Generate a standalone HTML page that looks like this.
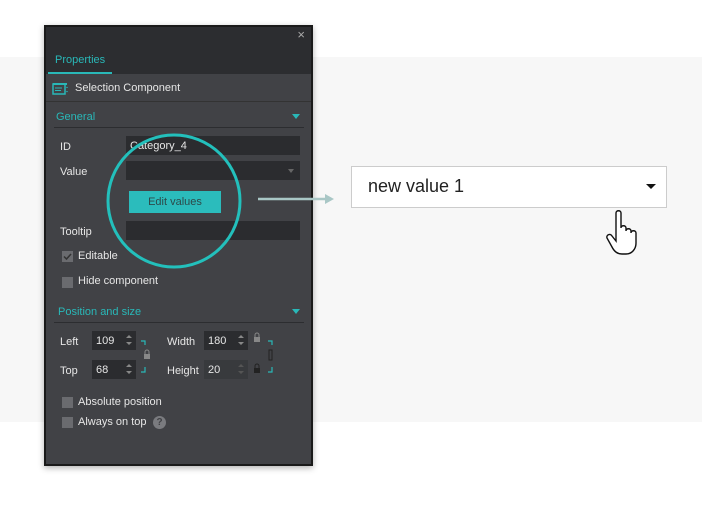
<!DOCTYPE html>
<html><head><meta charset="utf-8"><style>
*{margin:0;padding:0;box-sizing:border-box}
body{width:702px;height:505px;background:#fff;position:relative;overflow:hidden;font-family:"Liberation Sans",sans-serif}
.a{position:absolute}
.band{left:0;top:57px;width:702px;height:365px;background:#f7f7f7}
.panel{left:44px;top:25px;width:269px;height:441px;background:#414246;border:2px solid #1a1a1a;box-shadow:0 2px 6px rgba(0,0,0,.3)}
.t{color:#e6e6e6;font-size:11px}
.teal{color:#29b8b8;font-size:11px}
.in{background:#2b2c2f}
.cb{width:11px;height:11px;background:#6a6b6f}
.line{height:1px;background:#2c2d30}
.sp{width:9px;height:11px}
</style></head><body>
<div class="a band"></div>
<div class="a panel">
 <div class="a" style="left:0;top:0;width:265px;height:47px;background:#2c2d30"></div>
 <div class="a" style="right:6px;top:0px;color:#aaa;font-size:13px">×</div>
 <div class="a teal" style="left:9px;top:27px">Properties</div>
 <div class="a" style="left:2px;top:45px;width:64px;height:2px;background:#29b8b8"></div>
 <svg class="a" style="left:6px;top:55px" width="18" height="14"><rect x="1" y="2" width="12" height="10" fill="none" stroke="#29b8b8" stroke-width="1.5"/><rect x="1" y="1" width="14" height="2" fill="#29b8b8"/><line x1="3" y1="6" x2="10" y2="6" stroke="#29b8b8"/><line x1="3" y1="8.5" x2="9" y2="8.5" stroke="#29b8b8"/><path d="M14 6l2 0-1-1.5z M14 9l2 0-1 1.5z" fill="#29b8b8"/></svg>
 <div class="a t" style="left:29px;top:55px">Selection Component</div>
 <div class="a" style="left:0;top:74px;width:265px;height:1px;background:#333"></div>
 <div class="a teal" style="left:10px;top:84px">General</div>
 <div class="a" style="right:11px;top:87px;border:4px solid transparent;border-top:5px solid #29b8b8;border-bottom:0"></div>
 <div class="a line" style="left:8px;top:100px;width:250px"></div>
 <div class="a t" style="left:14px;top:114px">ID</div>
 <div class="a in" style="left:80px;top:109px;width:174px;height:19px"></div>
 <div class="a t" style="left:84px;top:113px">Category_4</div>
 <div class="a t" style="left:14px;top:139px">Value</div>
 <div class="a in" style="left:80px;top:134px;width:174px;height:19px"></div>
 <div class="a" style="left:242px;top:142px;border:3px solid transparent;border-top:4px solid #666;border-bottom:0"></div>
 <div class="a" style="left:83px;top:164px;width:92px;height:22px;background:#2bbcbc;color:#2d4a4a;font-size:11px;text-align:center;line-height:22px">Edit values</div>
 <div class="a t" style="left:14px;top:199px">Tooltip</div>
 <div class="a in" style="left:80px;top:194px;width:174px;height:19px"></div>
 <div class="a cb" style="left:16px;top:224px"></div>
 <svg class="a" style="left:16px;top:224px" width="11" height="11"><path d="M2 5.5l2.5 2.5 4.5-5" stroke="#333" stroke-width="1.5" fill="none"/></svg>
 <div class="a t" style="left:32px;top:223px">Editable</div>
 <div class="a cb" style="left:16px;top:250px"></div>
 <div class="a t" style="left:32px;top:248px">Hide component</div>
 <div class="a teal" style="left:12px;top:279px">Position and size</div>
 <div class="a" style="right:11px;top:282px;border:4px solid transparent;border-top:5px solid #29b8b8;border-bottom:0"></div>
 <div class="a line" style="left:8px;top:295px;width:250px"></div>
 <div class="a t" style="left:14px;top:309px">Left</div>
 <div class="a in" style="left:46px;top:304px;width:44px;height:19px"></div>
 <div class="a t" style="left:50px;top:308px">109</div>
 <div class="a t" style="left:14px;top:338px">Top</div>
 <div class="a in" style="left:46px;top:333px;width:44px;height:19px"></div>
 <div class="a t" style="left:50px;top:337px">68</div>
 <div class="a t" style="left:121px;top:309px">Width</div>
 <div class="a in" style="left:158px;top:304px;width:44px;height:19px"></div>
 <div class="a t" style="left:162px;top:308px">180</div>
 <div class="a t" style="left:121px;top:338px">Height</div>
 <div class="a" style="left:158px;top:333px;width:44px;height:19px;background:#383a3d"></div>
 <div class="a t" style="left:162px;top:337px">20</div>
 <svg class="a" style="left:0;top:0" width="265" height="441">
  <g fill="#888"><path d="M80 311l3-3 3 3z M80 315l3 3 3-3z M80 340l3-3 3 3z M80 344l3 3 3-3z M192 311l3-3 3 3z M192 315l3 3 3-3z"/></g>
  <path d="M192 340l3-3 3 3z M192 344l3 3 3-3z" fill="#555"/>
  <g fill="none" stroke="#29b8b8" stroke-width="1.2"><path d="M95 314h4v4 M95 345h4v-5 M222 314h4v4 M222 345h4v-5"/></g>
  <rect x="98" y="327" width="6" height="5" fill="#888"/><path d="M99 327v-2a2 2 0 0 1 4 0v2" stroke="#888" fill="none"/>
  <rect x="208" y="310" width="6" height="5" fill="#888"/><path d="M209 310v-2a2 2 0 0 1 4 0v2" stroke="#888" fill="none"/>
  <rect x="208" y="341" width="6" height="5" fill="#222"/><path d="M209 341v-2a2 2 0 0 1 4 0v2" stroke="#222" fill="none"/>
  <rect x="223" y="323" width="3" height="10" fill="none" stroke="#222"/>
 </svg>
 <div class="a cb" style="left:16px;top:370px"></div>
 <div class="a t" style="left:32px;top:369px">Absolute position</div>
 <div class="a cb" style="left:16px;top:390px"></div>
 <div class="a t" style="left:32px;top:389px">Always on top</div>
 <div class="a" style="left:107px;top:389px;width:13px;height:13px;border-radius:50%;background:#7a7b7f;color:#414246;font-size:10px;font-weight:bold;text-align:center;line-height:13px">?</div>
</div>
<svg class="a" style="left:0;top:0" width="702" height="505">
 <circle cx="174" cy="201" r="66" fill="none" stroke="#23c0bc" stroke-width="3"/>
 <line x1="258" y1="199" x2="325" y2="199" stroke="#a9c7c6" stroke-width="2.5"/>
 <path d="M325 194l9 5-9 5z" fill="#a9c7c6"/>
 <path d="M616 213c0-3 5-3 5 0v15c0-3 5-3 5 0v3c0-3 5-3 5 0v2c0-3 5-3 5 0v10c0 6-4 11-10 11h-4c-5 0-8-3-10-7l-5-9c-1-3 3-5 5-2l4 5z" fill="#fff" stroke="#111" stroke-width="1.4"/>
</svg>
<div class="a" style="left:351px;top:166px;width:316px;height:42px;background:#fff;border:1px solid #ccc"></div>
<div class="a" style="left:368px;top:176px;font-size:18px;color:#222">new value 1</div>
<div class="a" style="left:646px;top:184px;border:5px solid transparent;border-top:5px solid #111;border-bottom:0"></div>
</body></html>
